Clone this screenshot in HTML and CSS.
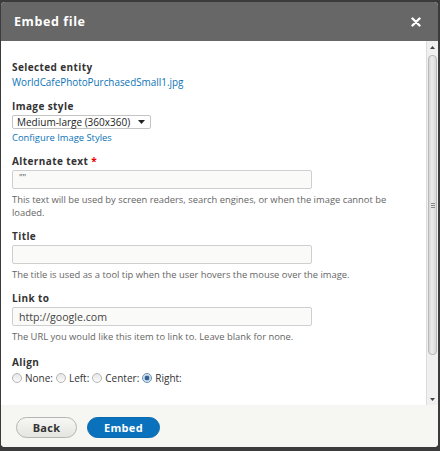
FILE: index.html
```html
<!DOCTYPE html>
<html>
<head>
<meta charset="utf-8">
<link rel="stylesheet" href="styles.css">
</head>
<body>
<div class="dialog">
  <div class="titlebar">
    <span class="title">Embed file</span>
    <span class="close">
      <svg width="10" height="10" viewBox="0 0 10 10"><path d="M1.5 1.5 L8.5 8.5 M8.5 1.5 L1.5 8.5" stroke="#fff" stroke-width="2.4" stroke-linecap="round"/></svg>
    </span>
  </div>
  <div class="body">
    <div class="form">
      <div class="item">
        <div class="label">Selected entity</div>
        <a class="link">WorldCafePhotoPurchasedSmall1.jpg</a>
      </div>
      <div class="item">
        <div class="label">Image style</div>
        <div class="select"><span class="sel-text">Medium-large (360x360)</span><svg class="caret" width="7" height="4" viewBox="0 0 7 4"><path d="M0 0 H7 L3.5 4 Z" fill="#222"/></svg></div>
        <a class="link small">Configure Image Styles</a>
      </div>
      <div class="item">
        <div class="label">Alternate text <span class="req">*</span></div>
        <div class="input"><span class="quote">""</span></div>
        <div class="desc">This text will be used by screen readers, search engines, or when the image cannot be loaded.</div>
      </div>
      <div class="item">
        <div class="label">Title</div>
        <div class="input"></div>
        <div class="desc">The title is used as a tool tip when the user hovers the mouse over the image.</div>
      </div>
      <div class="item">
        <div class="label">Link to</div>
        <div class="input"><span>http://google.com</span></div>
        <div class="desc">The URL you would like this item to link to. Leave blank for none.</div>
      </div>
      <div class="item align">
        <div class="label">Align</div>
        <div class="radios">
          <span class="radio"></span><span class="opt">None:</span>
          <span class="radio"></span><span class="opt">Left:</span>
          <span class="radio"></span><span class="opt">Center:</span>
          <span class="radio on"></span><span class="opt">Right:</span>
        </div>
      </div>
    </div>
    <div class="scrollbar">
      <div class="arrow up"><svg width="5" height="3" viewBox="0 0 5 3"><path d="M0 3 L2.5 0 L5 3 Z" fill="#444"/></svg></div>
      <div class="track"><div class="thumb"><span class="grip"></span></div></div>
      <div class="arrow down"><svg width="5" height="3" viewBox="0 0 5 3"><path d="M0 0 L5 0 L2.5 3 Z" fill="#444"/></svg></div>
    </div>
  </div>
  <div class="footer">
    <button class="btn back">Back</button>
    <button class="btn embed">Embed</button>
  </div>
</div>
</body>
</html>
```
FILE: styles.css
```css
html, body {
  margin: 0;
  padding: 0;
  background: #3b3b3b;
  width: 440px;
  height: 451px;
  overflow: hidden;
}
body {
  font-family: "Open Sans", "DejaVu Sans", sans-serif;
  color: #333;
}
.dialog {
  margin: 2px 2px 0 1px;
  width: 437px;
  height: 445px;
  border-radius: 4px;
  overflow: hidden;
  display: flex;
  flex-direction: column;
  background: #f6f6f3;
}
.titlebar {
  height: 39px;
  background: #676767;
  display: flex;
  align-items: center;
  justify-content: space-between;
  padding: 0 17px 0 13px;
  flex: none;
}
.title {
  color: #fff;
  font-weight: bold;
  font-size: 12.5px;
  letter-spacing: 0.6px;
}
.close {
  display: flex;
}
.body {
  height: 364px;
  background: #fff;
  display: flex;
  flex: none;
}
.form {
  flex: 1;
  padding: 19px 0 0 11px;
}
.item {
  margin-bottom: 10px;
}
.label {
  font-weight: bold;
  font-size: 10px;
  letter-spacing: 0.4px;
  color: #333;
  line-height: 14px;
  margin-bottom: 2px;
}
.req { color: #e00; }
.link {
  display: block;
  color: #0a74b7;
  font-size: 9.9px;
  line-height: 13px;
}
.link.small {
  font-size: 9.4px;
  margin-top: 2px;
}
.select {
  height: 12px;
  border: 1px solid #c4c4c4;
  border-radius: 2px;
  display: flex;
  align-items: center;
  justify-content: space-between;
  padding: 0 5px 0 4px;
  box-sizing: content-box;
  font-size: 10px;
  line-height: 12px;
  color: #222;
  width: 128px;
  white-space: nowrap;
}
.sel-text { white-space: nowrap; }
.caret { flex: none; }
.input {
  height: 19px;
  border: 1px solid #cfcfcf;
  border-radius: 2px;
  background: #fafaf8;
  display: flex;
  align-items: center;
  padding-left: 6px;
  box-sizing: border-box;
  width: 300px;
  font-size: 10.6px;
  color: #444;
  margin-bottom: 4px;
}
.quote { font-size: 9px; color: #555; margin-top: -4px; }
.desc {
  font-size: 9.4px;
  line-height: 13px;
  color: #666;
  max-width: 395px;
}
.align { margin-top: 12px; }
.radios {
  display: flex;
  align-items: center;
  font-size: 10px;
  color: #333;
  margin-top: 1px;
}
.radio {
  width: 8px;
  height: 8px;
  border-radius: 50%;
  border: 1px solid #b5b5b5;
  background: linear-gradient(#e6e6e6, #fbfbfb);
  margin-right: 3px;
  box-sizing: content-box;
}
.radio.on {
  border-color: #6b8fae;
  background: radial-gradient(circle, #37618c 0 2px, #a9c4dc 2.5px, #e3edf5 4px);
}
.opt { margin-right: 3px; }
.scrollbar {
  width: 11px;
  background: #f0f0f0;
  border-left: 1px solid #dcdcdc;
  display: flex;
  flex-direction: column;
  flex: none;
}
.arrow {
  height: 12px;
  display: flex;
  align-items: center;
  justify-content: center;
  flex: none;
}
.track {
  flex: 1;
  display: flex;
  flex-direction: column;
}
.thumb {
  height: 298px;
  margin: 2px 1px 0 1px;
  background: linear-gradient(90deg, #d4d4d4, #ececec 40%, #d8d8d8);
  border: 1px solid #b8b8b8;
  border-radius: 4px;
  display: flex;
  align-items: center;
  justify-content: center;
}
.grip {
  width: 4px;
  height: 5px;
  border-top: 1px solid #888;
  border-bottom: 1px solid #888;
  box-sizing: border-box;
  background: linear-gradient(#888, #888) center / 4px 1px no-repeat;
}
.footer {
  flex: 1;
  background: #f6f6f3;
  display: flex;
  align-items: center;
  padding: 2px 0 0 15px;
  gap: 10px;
}
.btn {
  font-family: "Open Sans", "DejaVu Sans", sans-serif;
  font-weight: bold;
  font-size: 11px;
  letter-spacing: 0.3px;
  height: 21px;
  border-radius: 11px;
  padding: 0;
  cursor: pointer;
}
.back {
  width: 61px;
  background: linear-gradient(#f7f7f5, #e4e4e0);
  border: 1px solid #b4b4b0;
  color: #333;
}
.embed {
  width: 73px;
  background: #0a72bc;
  border: 1px solid #0a6aae;
  color: #fff;
}
```
